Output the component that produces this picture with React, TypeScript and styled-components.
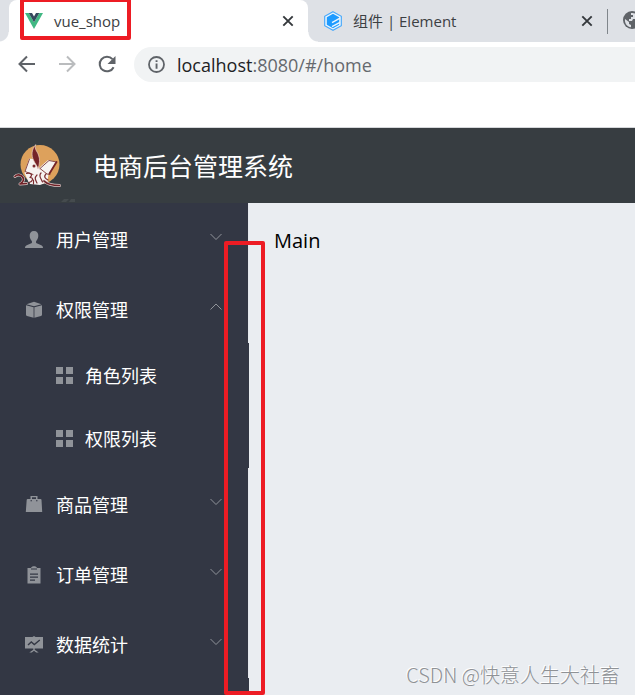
import React from "react";
import styled, { createGlobalStyle } from "styled-components";

const GlobalStyle = createGlobalStyle`
  * { box-sizing: border-box; }
  html, body, #root { height: 100%; margin: 0; }
  body {
    overflow: hidden;
    background: #fff;
    font-family: "Open Sans", "Noto Sans CJK SC", sans-serif;
  }
  button { font: inherit; }
`;

const Page = styled.div`
  position: relative;
  display: flex;
  flex-direction: column;
  min-height: 100vh;
`;

/* Browser chrome */
const TabStrip = styled.div`
  display: flex;
  height: 42px;
  padding-left: 9px;
  overflow: hidden;
  background: #dee1e6;
`;

const Tab = styled.div<{ $active?: boolean }>`
  position: relative;
  display: flex;
  flex: 0 0 299px;
  align-items: center;
  padding: 0 14px 0 16px;
  border-radius: 8px 8px 0 0;
  background: ${(p) => (p.$active ? "#fff" : "transparent")};
  color: #3c4043;
  font-size: 15px;

  &::before, &::after {
    content: "";
    display: ${(p) => (p.$active ? "block" : "none")};
    position: absolute;
    bottom: 0;
    width: 10px;
    height: 10px;
  }
  &::before {
    right: 100%;
    background: radial-gradient(circle at 0 0, transparent 9px, #fff 10px);
  }
  &::after {
    left: 100%;
    background: radial-gradient(circle at 100% 0, transparent 9px, #fff 10px);
  }
`;

const TabTitle = styled.span`
  flex: 1;
  margin-left: 11px;
  line-height: 20px;
  white-space: nowrap;
`;

const IconButton = styled.button`
  display: flex;
  padding: 0;
  border: 0;
  background: none;
  color: #5f6368;

  &:disabled { color: #babcbe; }
`;

const TabDivider = styled.div`
  flex: none;
  align-self: center;
  width: 1px;
  height: 25px;
  margin-right: 15px;
  background: #80868b;
`;

const NextTab = styled.div`
  display: flex;
  flex: none;
  align-items: center;
  padding-bottom: 2px;
`;

const Toolbar = styled.div`
  display: flex;
  align-items: center;
  gap: 20px;
  height: 45px;
  padding-left: 17px;
`;

const AddressBar = styled.div`
  display: flex;
  flex: 1;
  align-items: center;
  gap: 12px;
  height: 35px;
  margin-left: -3px;
  padding-left: 14px;
  border-radius: 18px 0 0 18px;
  background: #f1f3f4;
  color: #5f6368;
  font-size: 18px;
`;

const Address = styled.a`
  color: #65696e;
  line-height: 26px;
  text-decoration: none;
`;

const Host = styled.span`
  color: #202124;
`;

const Bookmarks = styled.div`
  height: 41px;
  border-bottom: 1px solid #d5d7da;
`;

/* Admin application */
const AppHeader = styled.header`
  display: flex;
  align-items: center;
  gap: 17px;
  height: 75px;
  background: #373d41;
  color: #fff;
`;

const Title = styled.h1`
  margin: 0;
  font-size: 25px;
  font-weight: 400;
  line-height: 36px;
`;

const Body = styled.div`
  display: flex;
  flex: 1;
`;

const Sidebar = styled.nav`
  flex: 0 0 249px;
  background: #333744;
  color: #fff;
  font-size: 18px;
`;

const MenuItem = styled.button`
  display: flex;
  align-items: center;
  width: 100%;
  height: 70px;
  padding: 4px 26px 0 25px;
  border: 0;
  border-right: 1px solid #e6e8ec;
  background: none;
  color: inherit;
  text-align: left;
`;

const Label = styled.span`
  flex: 1;
  margin-left: 13px;
  line-height: 26px;
`;

const Arrow = styled.span`
  display: flex;
  padding-bottom: 6px;
`;

const SubMenu = styled.div`
  display: grid;
  gap: 1px;
`;

const SubItem = styled.a`
  display: flex;
  align-items: center;
  height: 62px;
  padding: 4px 0 0 55px;
  color: inherit;
  text-decoration: none;

  ${Label} { margin-left: 12px; }
`;

const Main = styled.main`
  flex: 1;
  padding: 24px 25px;
  background: #eaedf1;
  color: #000;
  font-size: 20px;
  line-height: 28px;
`;

const Watermark = styled.div`
  position: absolute;
  right: 15px;
  bottom: 5px;
  color: #8f9296;
  font-family: "Noto Sans CJK SC", sans-serif;
  font-size: 20px;
  font-weight: 300;
  line-height: 30px;
  text-shadow: -1px -1px 0 #fff;
`;

const TabMark = styled.div`
  position: absolute;
  top: -2px;
  left: 20px;
  width: 111px;
  height: 42px;
  border: 4px solid #ed1c24;
  border-radius: 2px;
`;

const EdgeMark = styled.div`
  position: absolute;
  top: 241px;
  bottom: 0;
  left: 224px;
  width: 41px;
  border: 4px solid #ed1c24;
  border-radius: 2px;
`;

const VueIcon = () => (
  <svg width="18" height="16" viewBox="0 0 18 16">
    <path fill="#41b883" d="M0 0h3.7L9 9.2 14.3 0H18L9 16z" />
    <path fill="#35495e" d="M3.7 0H7l2 3.6L11 0h3.3L9 9.2z" />
  </svg>
);

const ElementIcon = () => (
  <svg width="18" height="20" viewBox="0 0 18 20">
    <path fill="#eef6fd" stroke="#49a9fa" strokeWidth="1.2" d="M9 .7 17.3 5.3v9.4L9 19.3.7 14.7V5.3z" />
    <path fill="#1e9bff" d="M9 2.8 15.2 6.200v7.600L9 17.200 2.800 13.800V6.200z" />
    <path fill="none" stroke="#eef6fd" strokeWidth="1.500" d="M16 7.200 8 11.600M16 11.400 8 15.600" />
  </svg>
);

const CloseIcon = () => (
  <svg width="12" height="12" viewBox="0 0 12 12">
    <path stroke="#34383c" strokeWidth="1.9" d="m1.3 1.3 9.4 9.4m0-9.4-9.4 9.4" />
  </svg>
);

const GlobeIcon = () => (
  <svg width="18" height="18" viewBox="0 0 18 18">
    <circle cx="9" cy="9" r="9" fill="#5f6368" />
    <path fill="#dee1e6" d="M2 8l4 3v2l2 1v2.2C4 15.7 1.4 12 2 8zM8 2c3-.6 6 1 7.5 4L13 8l-3 0-1 2H6V8h2V6h2V4H8z" />
  </svg>
);

const ArrowIcon = ({ right }: { right?: boolean }) => (
  <svg width="20" height="20" viewBox="0 0 20 20" fill="none" stroke="currentColor" strokeWidth="2">
    <path d={right ? "M2 9h15M10 1.500l7.500 7.500-7.500 7.500" : "M18 9H3M10 1.500 2.500 9l7.500 7.500"} />
  </svg>
);

const ReloadIcon = () => (
  <svg width="20" height="20" viewBox="0 0 20 20">
    <path fill="none" stroke="currentColor" strokeWidth="2" d="M16.600 12.200A7.300 7.300 0 1 1 15.500 4.200" />
    <path fill="currentColor" d="M18.500 1v8h-8z" />
  </svg>
);

const InfoIcon = () => (
  <svg width="17" height="17" viewBox="0 0 17 17">
    <circle cx="8.5" cy="8.5" r="7.5" fill="none" stroke="currentColor" strokeWidth="1.8" />
    <path fill="currentColor" d="M7.6 4.3h1.9v1.8H7.6zM7.6 7.4h1.9v5.3H7.6z" />
  </svg>
);

const ShopLogo = () => (
  <svg width="76" height="75" viewBox="0 0 76 75" strokeLinejoin="round" strokeLinecap="round">
    <circle cx="40" cy="36.500" r="19.500" fill="#dda15c" />
    <path fill="#f6f2f1" d="M29 30.500 33 31l6 9 9-8 8 1.500-7.500 12.500-1 7-7 2-12-1-4-9z" />
    <path fill="#f6f2f1" d="M27 46h18l3 8-8 3-10-1z" />
    <path fill="none" stroke="#8a4a48" strokeWidth="1" d="M29.500 31 25 43.500l8 3M40 40.500l9-8 7.500 1.500M40 40.500l7 5.500 3 .500" />
    <path fill="none" stroke="#752329" strokeWidth="1.800" d="m56.500 34-7 11.500" />
    <path fill="#752329" stroke="#ead0c4" strokeWidth=".700" d="M35.500 17c-4.500 5-4 11-2 15 1 3 3.500 5 4.500 9 1.700-5 2.200-10 .500-14-1.300-4-4-5-3-10z" />
    <path fill="none" stroke="#d9c9c7" strokeWidth="3" d="M15 48.500c3-3 7-1 8 1 1.500 3-.500 5-3 6.500l6.500-.500M44 53c4 4 9 4.500 15.500 4.500" />
    <path fill="none" stroke="#702329" strokeWidth="1.700" d="M15 48.500c3-3 7-1 8 1 1.500 3-.500 5-3 6.500l6.500-.500M44 53c4 4 9 4.500 15.500 4.500" />
    <path fill="none" stroke="#7b2c30" strokeWidth="1.200" d="M26.500 45.500c4-1 7 1 3.500 4 4 0 3 4-1 5M33.500 52v4M37 47c-3 3-1.500 5 0 8M41 45c-3 3 0 5 1.500 9M46 46c-3 3 0 5 2 6" />
    <circle cx="34" cy="38" r="1.500" fill="#7b2c30" />
    <path fill="#454b4e" d="m61 74 3-3h5l-3 3zm8 0 2-3h4v3z" />
  </svg>
);

type IconName = "user" | "box" | "bag" | "order" | "chart" | "grid";

const glyphs: Record<IconName, React.ReactNode> = {
  user: <path d="M9 0c3 0 4.5 2 4.3 5-.2 2.5-1.1 4-2.2 5v2l5.2 2.2c1 .5 1.7 1.4 1.7 2.8H0c0-1.4.7-2.3 1.7-2.8L6.9 12v-2C5.800 9 4.900 7.500 4.700 5 4.500 2 6 0 9 0z" />,
  box: (
    <>
      <path d="M9 .800 16.500 3.300 9 5.300 1.500 3.300z" />
      <path d="M1 4.300l7.600 2v10.400L2 15c-.700-.200-1-.700-1-1.300zM17 4.300l-7.600 2v10.400L16 15c.700-.200 1-.700 1-1.300z" />
    </>
  ),
  bag: <path fillRule="evenodd" d="M5.500 0h7v3h3c.600 0 .900.300 1 .800L17.200 16H.800L1.700 3.800c.100-.500.400-.800 1-.800h2.800zm1.500 1.300V3h4V1.300zM5.500 4.300v1h1.500v-1zm5.500 0v1h1.500v-1z" />,
  order: <path fillRule="evenodd" d="M2.500 2H6c.5-2.500 5.500-2.500 6 0h3.500v15.500h-13zM6 2.500v1h6v-1zM5 7.500v1.200h8V7.500zm0 3v1.200h8v-1.200zm0 3v1.200h5v-1.200z" />,
  chart: (
    <>
      <path d="M0 1h7.500L9 0l1.500 1H18v11.500H0zM8.300 12.500h1.400v1.200l4 2.800h-2.500L9 14.800l-2.200 1.700H4.300l4-2.800z" />
      <path fill="none" stroke="#333744" strokeWidth="1.400" d="m3 9 3.300-3 3 2.500 5.500-4.500" />
    </>
  ),
  grid: <path d="M1 0h7v7H1zM11 0h7v7h-7zM1 10h7v7H1zM11 10h7v7h-7z" />,
};

const MenuIcon = ({ name }: { name: IconName }) => (
  <svg width="18" height="18" viewBox="0 0 18 18" fill="#909399">{glyphs[name]}</svg>
);

const Chevron = ({ open }: { open?: boolean }) => (
  <svg width="12" height="8" viewBox="0 0 12 8" fill="none" stroke="#909399">
    <path d={open ? "M.5 6.5 6 1l5.500 5.500" : "M.5 1 6 6.500 11.500 1"} />
  </svg>
);

interface Entry {
  icon: IconName;
  label: string;
  children?: string[];
}

const menu: Entry[] = [
  { icon: "user", label: "用户管理" },
  { icon: "box", label: "权限管理", children: ["角色列表", "权限列表"] },
  { icon: "bag", label: "商品管理" },
  { icon: "order", label: "订单管理" },
  { icon: "chart", label: "数据统计" },
];

export default function App() {
  return (
    <Page>
      <GlobalStyle />
      <TabStrip>
        <Tab $active>
          <VueIcon />
          <TabTitle>vue_shop</TabTitle>
          <IconButton aria-label="Close vue_shop"><CloseIcon /></IconButton>
        </Tab>
        <Tab>
          <ElementIcon />
          <TabTitle>组件 | Element</TabTitle>
          <IconButton aria-label="Close Element"><CloseIcon /></IconButton>
        </Tab>
        <TabDivider />
        <NextTab><GlobeIcon /></NextTab>
      </TabStrip>
      <Toolbar>
        <IconButton aria-label="Back"><ArrowIcon /></IconButton>
        <IconButton aria-label="Forward" disabled><ArrowIcon right /></IconButton>
        <IconButton aria-label="Reload"><ReloadIcon /></IconButton>
        <AddressBar>
          <InfoIcon />
          <Address href="#/home"><Host>localhost</Host>:8080/#/home</Address>
        </AddressBar>
      </Toolbar>
      <Bookmarks />
      <AppHeader>
        <ShopLogo />
        <Title>电商后台管理系统</Title>
      </AppHeader>
      <Body>
        <Sidebar>
          {menu.map(({ icon, label, children }) => (
            <React.Fragment key={label}>
              <MenuItem aria-expanded={!!children}>
                <MenuIcon name={icon} />
                <Label>{label}</Label>
                <Arrow><Chevron open={!!children} /></Arrow>
              </MenuItem>
              {children && (
                <SubMenu>
                  {children.map((child) => (
                    <SubItem href="#/home" key={child}>
                      <MenuIcon name="grid" />
                      <Label>{child}</Label>
                    </SubItem>
                  ))}
                </SubMenu>
              )}
            </React.Fragment>
          ))}
        </Sidebar>
        <Main>Main</Main>
      </Body>
      <Watermark>CSDN @快意人生大社畜</Watermark>
      <TabMark />
      <EdgeMark />
    </Page>
  );
}
